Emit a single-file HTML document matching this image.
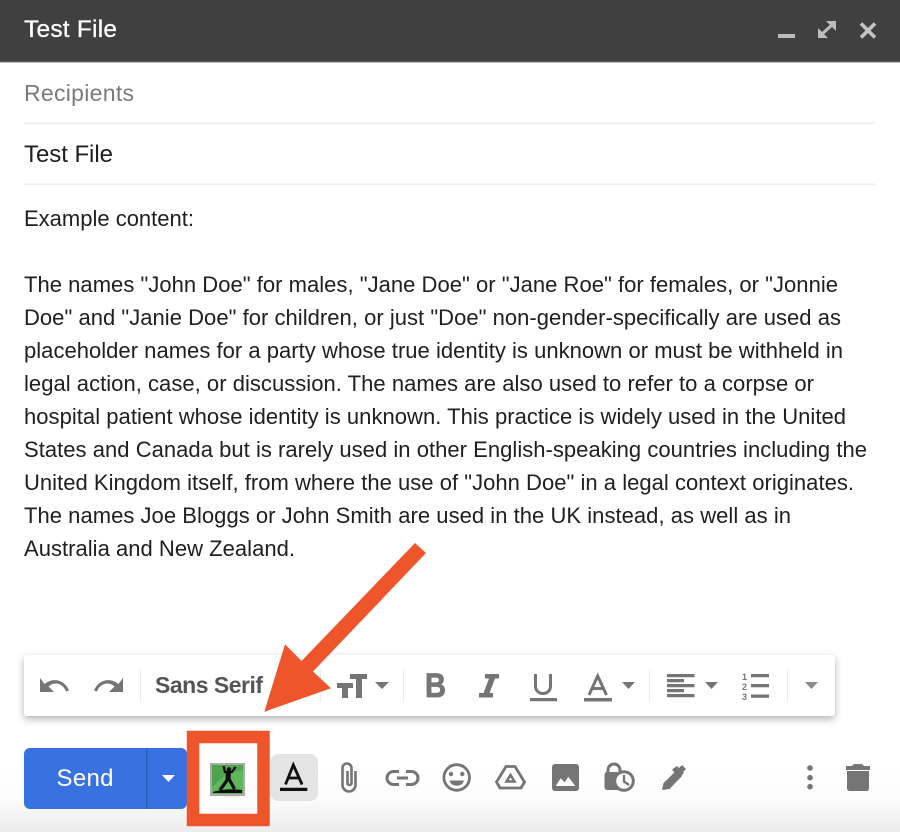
<!DOCTYPE html>
<html><head><meta charset="utf-8"><style>
html,body{margin:0;padding:0;background:#fff}
svg{display:block;filter:blur(.35px)}
text{font-family:"Liberation Sans",sans-serif}
.b{font-size:22px;fill:#202020}
</style></head><body>
<svg width="900" height="832" viewBox="0 0 900 832" xmlns="http://www.w3.org/2000/svg">
<defs>
<linearGradient id="g" x1="0" y1="0" x2="0" y2="1"><stop offset="0" stop-color="#fff"/><stop offset=".45" stop-color="#fcfcfc"/><stop offset="1" stop-color="#ececec"/></linearGradient>
<filter id="s" x="-5%" y="-30%" width="110%" height="170%"><feDropShadow dx="0" dy="3" stdDeviation="4" flood-color="#000" flood-opacity=".3"/></filter>
</defs>
<rect width="900" height="832" fill="#fff"/>
<rect y="770" width="900" height="62" fill="url(#g)"/>
<rect width="900" height="62" fill="#404040"/>
<rect y="61.500" width="900" height="1" fill="#777"/>
<text x="24" y="37" font-size="24.500" textLength="93" fill="#fff" stroke="#fff" stroke-width=".3">Test File</text>
<rect x="778" y="34" width="17" height="4" fill="#bdbdbd"/>
<path d="M822 34l10-9" stroke="#bdbdbd" stroke-width="3" fill="none"/>
<path d="M818 38v-10l10 10zM836 21v10l-10-10z" fill="#bdbdbd"/>
<path d="M861 23.500l14 14M875 23.500l-14 14" stroke="#c4c4c4" stroke-width="3.600" fill="none"/>
<text x="24" y="101" font-size="23" textLength="110" fill="#7b7b7b">Recipients</text>
<rect x="24" y="122.500" width="851" height="1.500" fill="#eceeee"/>
<text x="24" y="162" font-size="24" textLength="89" fill="#202020">Test File</text>
<rect x="24" y="183.500" width="851" height="1.500" fill="#eceeee"/>
<text class="b" x="24" y="226" textLength="170">Example content:</text>
<text class="b" x="24" y="292" textLength="814">The names "John Doe" for males, "Jane Doe" or "Jane Roe" for females, or "Jonnie</text>
<text class="b" x="24" y="325" textLength="817">Doe" and "Janie Doe" for children, or just "Doe" non-gender-specifically are used as</text>
<text class="b" x="24" y="358" textLength="819">placeholder names for a party whose true identity is unknown or must be withheld in</text>
<text class="b" x="24" y="391" textLength="790">legal action, case, or discussion. The names are also used to refer to a corpse or</text>
<text class="b" x="24" y="424" textLength="822">hospital patient whose identity is unknown. This practice is widely used in the United</text>
<text class="b" x="24" y="457" textLength="843">States and Canada but is rarely used in other English-speaking countries including the</text>
<text class="b" x="24" y="490" textLength="830">United Kingdom itself, from where the use of "John Doe" in a legal context originates.</text>
<text class="b" x="24" y="523" textLength="767">The names Joe Bloggs or John Smith are used in the UK instead, as well as in</text>
<text class="b" x="24" y="556" textLength="271">Australia and New Zealand.</text>

<rect x="24" y="655" width="811" height="61" rx="3" fill="#fff" filter="url(#s)"/>
<g fill="#eceeee"><rect x="140" y="669" width="1" height="33"/><rect x="320" y="669" width="1" height="33"/><rect x="403" y="669" width="1" height="33"/><rect x="649" y="669" width="1" height="33"/><rect x="787" y="669" width="1" height="33"/></g>
<g fill="#757575">
<path d="M40 678v14h14l-5.500-5.500c5-5 14-4 17.500 5l3-1c-4-10-15-14-24.500-6.500z"/>
<path d="M123 678v14h-14l5.500-5.500c-5-5-14-4-17.500 5l-3-1c4-10 15-14 24.500-6.500z"/>
<text x="155" y="693" font-size="23" font-weight="bold" textLength="108" fill="#555">Sans Serif</text>
<path d="M350 674h17v5h-5v19h-6v-19h-6zM337 683h16v5h-5v10h-6v-10h-5z"/>
<path d="M375 682h14l-7 7z"/>
<text transform="translate(425,697) scale(.88,1.05)" font-size="33" font-weight="bold" fill="#757575" stroke="#757575" stroke-width=".8">B</text>
<path d="M485 674h14v4.500h-4l-5.500 14.500h3.500v4.500h-14v-4.500h4.500l5.500-14.500h-4z"/>
<path d="M530 698h27v3.200h-27z"/>
<path d="M584 698h28v3.500h-28z"/>
<path d="M622 682h13l-6.500 7z"/>
<path d="M667 674h27.500v3.200h-27.500zM667 679h17v3.200h-17zM667 684h27.500v3.200h-27.500zM667 689h17v3.200h-17zM667 694h27.500v3.200h-27.500z"/>
<path d="M705 682h13l-6.500 7z"/>
<path d="M751 674h18v3.200h-18zM751 684h18v3.200h-18zM751 694.500h18v3.200h-18z"/>
<text x="742" y="680" font-size="9" font-weight="bold" fill="#757575">1</text>
<text x="742" y="690" font-size="9" font-weight="bold" fill="#757575">2</text>
<text x="742" y="700" font-size="9" font-weight="bold" fill="#757575">3</text>
<path d="M805 682h13l-6.500 7z" fill="#8a8a8a"/>
</g>
<g fill="none" stroke="#757575" stroke-width="3">
<path d="M535.500 674V686c0 10 15 10 15 0V674"/>
<path d="M589 695L597.700 676l8.800 19M592 688.500h11"/>
</g>

<rect x="24" y="748" width="163" height="61" rx="6" fill="#3871e0"/>
<rect x="146" y="748" width="1.500" height="61" fill="#2a5cbf"/>
<text x="85" y="786" font-size="24" text-anchor="middle" textLength="57" fill="#fff">Send</text>
<path d="M162 775h13l-6.500 7z" fill="#fff"/>

<rect x="193" y="737" width="70.500" height="83" fill="#fdfdfd" stroke="#ef552b" stroke-width="12.500"/>
<rect x="210" y="763" width="35" height="33" fill="#a9aca9"/>
<rect x="212" y="765" width="31" height="29" fill="#5cb85a"/>
<path d="M212 765h31v5c-12 1-24 8-31 18z" fill="#4a9a4c" opacity=".7"/>
<g fill="none" stroke="#0c0c0c">
<path d="M223.500 766l1.500 6 7 0 3.500-5" stroke-width="2.300"/>
<path d="M228.500 771l-.5 9" stroke-width="5"/>
<path d="M228 779l-8 11M229 779l5.500 10" stroke-width="3.200"/>
</g>
<circle cx="229" cy="769.500" r="2.200" fill="#0c0c0c"/>
<path d="M213 792c8-3 20-3 29-2v3h-29z" fill="#0c0c0c"/>

<rect x="270" y="754" width="48" height="47" rx="8" fill="#e4e4e4"/>
<path d="M280 787.700h27.300v3.300h-27.300z" fill="#111"/>
<path d="M285.500 784.500L293.300 765l8.800 19.500M288 778h11" fill="none" stroke="#111" stroke-width="2.800"/>

<g fill="none" stroke="#757575" stroke-width="2.600">
<path d="M355.500 771V785a6.500 6.500 0 0 1-13 0V768a4.500 4.500 0 0 1 9 0V783a2 2 0 0 1-4 0V771"/>
<path d="M399 771.500h-5.500a6.500 6.500 0 0 0 0 13h5.500M406 771.500h5.500a6.500 6.500 0 0 1 0 13h-5.500" stroke-width="3"/>
<path d="M397 778h11" stroke-width="3"/>
<circle cx="456.700" cy="777.500" r="12.800" stroke-width="2.800"/>
<path d="M506 766.500h9l9.500 15.500-3.500 6h-21l-3.500-6z" stroke-width="2.800"/>
<path d="M510.500 775l4 6.500h-8z" stroke-width="2.500"/>
</g>
<g fill="#757575">
<circle cx="451" cy="774" r="2.200"/><circle cx="462.300" cy="774" r="2.200"/>
<path d="M449.500 780.500h14.500c-1.500 7-13 7-14.500 0z"/>
<rect x="552" y="764" width="27" height="27" rx="3"/>
<rect x="604.500" y="772" width="15" height="18" rx="2.500"/>
<path d="M608 773v-3a6 6 0 0 1 12 0v3" fill="none" stroke="#757575" stroke-width="3"/>
<circle cx="624" cy="781" r="10.800"/>
<path d="M662 790l1.500-7 13-12.500 5.500 5.500-12.500 13zM672 769.500l5-3.500 2 2 3-3 4 4-3 3 1 1-5 5z"/>
<circle cx="810" cy="768" r="2.800"/><circle cx="810" cy="777.700" r="2.800"/><circle cx="810" cy="786.700" r="2.800"/>
<path d="M846 766h6l2-2h8l2 2h6v4h-24zM847 771h22v17c0 2-1 3-3 3h-16c-2 0-3-1-3-3z"/>
</g>
<path d="M555.700 786l5-7.700 4 4 3.600-5.500 7 9.200z" fill="#fdfdfd"/>
<circle cx="624" cy="781" r="7.800" fill="#fdfdfd"/>
<path d="M624 775v6.500l5 3.500" stroke="#757575" stroke-width="2.300" fill="none"/>
<path d="M415 543L426 553 313 671.500 331 688.300 264.300 711.700 285 644.300 301.500 661z" fill="#ef552b"/>
</svg>
</body></html>
